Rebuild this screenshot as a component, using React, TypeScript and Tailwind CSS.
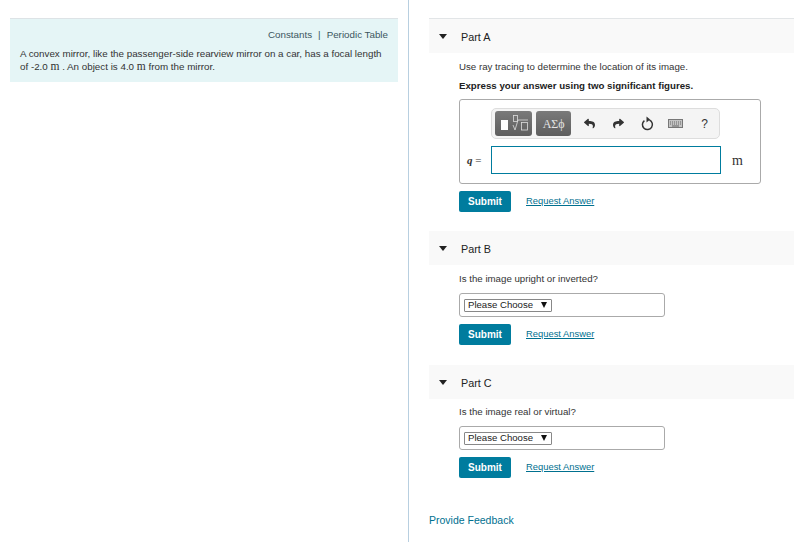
import { FaReply, FaShare } from "react-icons/fa";

const serif = "font-['Liberation_Serif',serif]";

function Caret() {
  return <span className="ml-[10px] mr-[14px] h-0 w-0 border-x-[4px] border-t-[5px] border-x-transparent border-t-[#222]" />;
}

function PartHeader({ label }: { label: string }) {
  return (
    <div className="flex h-[34px] items-center bg-[#f9f9f9] text-[10.8px] text-[#222]">
      <Caret />
      <span className="pt-[2px]">{label}</span>
    </div>
  );
}

function Actions() {
  return (
    <div className="flex items-center">
      <button className="h-[21px] w-[52px] rounded-[2px] bg-[#007c9e] text-[10px] font-bold text-white">Submit</button>
      <a className="ml-[15px] text-[9.4px] font-medium text-[#00708f] underline">Request Answer</a>
    </div>
  );
}

function ChoiceBox() {
  return (
    <div className="flex h-[24px] w-[206px] items-center rounded-[3px] border border-[#aaa] px-[4px]">
      <div className="flex h-[13px] w-[88px] items-center justify-between rounded-[1px] border border-[#888] pl-[3px] pr-[3px] text-[9.6px] text-[#222]">
        <span>Please Choose</span>
        <span className="mr-[1px] h-0 w-0 border-x-[3.5px] border-t-[6px] border-x-transparent border-t-[#111]" />
      </div>
    </div>
  );
}

function TemplateIcon() {
  return (
    <svg width="37" height="25" viewBox="0 0 37 25" fill="none">
      <rect x="6" y="9" width="7" height="10" fill="#fff" />
      <rect x="18.5" y="4.5" width="4" height="6" stroke="#ddd" strokeWidth="0.8" />
      <path d="M18 14l2 5 3-10h10" stroke="#ddd" strokeWidth="0.8" />
      <rect x="26.5" y="11.5" width="6" height="7.5" stroke="#ddd" strokeWidth="0.8" />
    </svg>
  );
}

function ToolSlot({ children }: { children: React.ReactNode }) {
  return <span className="flex w-[28.75px] items-center justify-center">{children}</span>;
}

function Toolbar() {
  return (
    <div className="flex h-[31px] w-[229px] items-center rounded-[5px] border border-[#ddd] bg-[#f4f4f4] pl-[3px]">
      <div className="flex h-[25px] w-[37px] items-center justify-center rounded-[3px] bg-linear-to-b from-[#7a7a7a] to-[#5e5e5e]">
        <TemplateIcon />
      </div>
      <div className={`ml-[4px] flex h-[25px] w-[36px] items-center justify-center rounded-[3px] bg-linear-to-b from-[#7a7a7a] to-[#5e5e5e] text-[12px] text-[#e4e4e4] ${serif}`}>
        ΑΣϕ
      </div>
      <div className="ml-[4px] flex items-center">
        <ToolSlot><FaReply size={11} className="text-[#333]" /></ToolSlot>
        <ToolSlot><FaShare size={11} className="text-[#333]" /></ToolSlot>
        <ToolSlot>
          <svg width="13" height="15" viewBox="0 0 13 15" fill="none">
            <path d="M3.4 4.6a5 5 0 1 0 5-.6" stroke="#333" strokeWidth="1.5" />
            <path d="M5.5 0.5v6l3.6-3z" fill="#333" />
          </svg>
        </ToolSlot>
        <ToolSlot>
          <svg width="15" height="9" viewBox="0 0 15 9">
            <rect x="0.5" y="0.5" width="14" height="8" fill="#c4c4c4" stroke="#777" />
            <path d="M2 3h11M2 5h11" stroke="#666" strokeDasharray="1 1" />
            <path d="M4 7h7" stroke="#666" />
          </svg>
        </ToolSlot>
        <ToolSlot><span className="text-[12px] text-[#333]">?</span></ToolSlot>
      </div>
    </div>
  );
}

export default function App() {
  return (
    <div className="flex h-[542px] w-[794px] overflow-hidden bg-white font-['Liberation_Sans',sans-serif]">
      <div className="h-full w-[409px] shrink-0 border-r border-[#b8cfe0] pl-[10px] pr-[10px] pt-[18px]">
        <div className="h-[64px] border-t border-[#dde3e6] bg-[#e5f5f6] px-[10px] pt-[9px]">
          <div className="flex justify-end gap-[6px] text-[9.8px] text-[#3c5560]">
            <span>Constants</span>
            <span>|</span>
            <span>Periodic Table</span>
          </div>
          <p className="mt-[5px] w-[364px] text-[9.8px] leading-[12px] text-[#333]">
            A convex mirror, like the passenger-side rearview mirror on a car, has a focal length of -2.0 <span className={`text-[11.5px] ${serif}`}>m</span> . An object is 4.0 <span className={`text-[11.5px] ${serif}`}>m</span> from the mirror.
          </p>
        </div>
      </div>

      <div className="flex-1 pl-[20px] pt-[18px]">
        <div className="border-t border-[#e2e5e7]">
          <PartHeader label="Part A" />
        </div>
        <div className="pl-[30px]">
          <p className="mt-[8px] text-[9.7px] leading-[12px] text-[#333]">Use ray tracing to determine the location of its image.</p>
          <p className="mt-[7px] text-[9.7px] font-bold leading-[12px] text-[#222]">Express your answer using two significant figures.</p>
          <div className="mt-[7px] flex h-[85px] w-[302px] flex-col rounded-[3px] border border-[#aaa] pl-[31px] pt-[8px]">
            <Toolbar />
            <div className="mt-[7px] flex items-center">
              <span className={`-ml-[24px] w-[24px] text-[11px] text-[#333] ${serif}`}><i className="font-semibold">q</i> =</span>
              <div className="h-[28px] w-[230px] border border-[#007c9e] bg-white" />
              <span className={`ml-[11px] text-[14px] text-[#333] ${serif}`}>m</span>
            </div>
          </div>
          <div className="mt-[7px]"><Actions /></div>
        </div>

        <div className="mt-[19px]"><PartHeader label="Part B" /></div>
        <div className="pl-[30px]">
          <p className="mt-[8px] text-[9.7px] leading-[12px] text-[#333]">Is the image upright or inverted?</p>
          <div className="mt-[8px]"><ChoiceBox /></div>
          <div className="mt-[7px]"><Actions /></div>
        </div>

        <div className="mt-[20px]"><PartHeader label="Part C" /></div>
        <div className="pl-[30px]">
          <p className="mt-[7px] text-[9.7px] leading-[12px] text-[#333]">Is the image real or virtual?</p>
          <div className="mt-[8px]"><ChoiceBox /></div>
          <div className="mt-[7px]"><Actions /></div>
        </div>

        <a className="mt-[35px] block text-[10.5px] text-[#00708f]">Provide Feedback</a>
      </div>
    </div>
  );
}
